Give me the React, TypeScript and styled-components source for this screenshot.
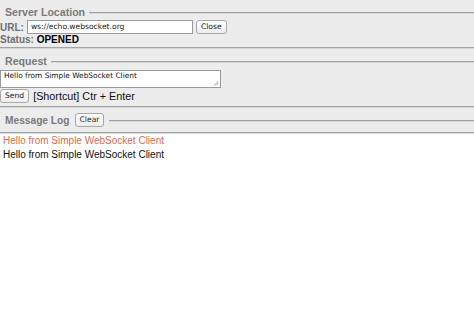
import styled, { createGlobalStyle } from "styled-components";

const GlobalStyle = createGlobalStyle`
	html, body {
		margin: 0;
		padding: 0;
		background: #ffffff;
	}
	body {
		font-family: "Liberation Sans", Arial, sans-serif;
		font-size: 9.6px;
		color: #111111;
	}
`;

const Panel = styled.div`
	background: #ececec;
	overflow: hidden;
`;

const Section = styled.section<{ $bottom: number }>`
	display: flex;
	flex-direction: column;
	padding-bottom: ${({ $bottom }) => $bottom}px;
	border-bottom: 1px solid #a4a4a4;
	box-shadow: 0 1px 0 #d6d6d6;
	margin-bottom: 1px;
`;

const Legend = styled.div`
	display: flex;
	align-items: center;
	height: 16px;
	margin-top: 4px;
	gap: 4px;

	&::after {
		content: "";
		flex: 1;
		height: 1px;
		background: #a4a4a4;
		box-shadow: 0 1px 0 #d6d6d6;
	}
`;

const LegendText = styled.span`
	padding-left: 5px;
	font-size: 10.6px;
	font-weight: 700;
	color: #7a7a7a;
	white-space: nowrap;
`;

const Row = styled.div`
	display: flex;
	align-items: center;
	gap: 3px;
`;

const Label = styled.span`
	font-weight: 700;
	color: #6f6f6f;
	font-size: 10px;
`;

const TextInput = styled.div`
	width: 161px;
	height: 12px;
	border: 1px solid #9a9a9a;
	background: #fff;
	font-family: "DejaVu Sans", sans-serif;
	font-size: 7.6px;
	line-height: 12px;
	padding-left: 3px;
	color: #222;
`;

const Button = styled.button`
	font-family: "DejaVu Sans", sans-serif;
	font-size: 7.6px;
	color: #222;
	background: linear-gradient(#ffffff, #ececec);
	border: 1px solid #a8a8a8;
	border-radius: 3px;
	height: 14px;
	padding: 0 4px;
	line-height: 12px;
	cursor: pointer;
`;

const Status = styled.div`
	margin-top: 1px;
	line-height: 9px;
	font-size: 10px;
`;

const StatusValue = styled.span`
	font-weight: 700;
	color: #000;
`;

const TextArea = styled.div`
	position: relative;
	width: 216px;
	height: 16px;
	margin-top: 1px;
	border: 1px solid #9a9a9a;
	background: #fff;
	font-family: "DejaVu Sans", sans-serif;
	font-size: 7.4px;
	line-height: 10px;
	padding-left: 3px;
	color: #111;

	svg {
		position: absolute;
		right: 1px;
		bottom: 1px;
	}
`;

const SendRow = styled(Row)`
	margin-top: 1px;
	gap: 4px;
`;

const Hint = styled.span`
	font-size: 10.8px;
	color: #111;
`;

const LogLegend = styled(Legend)`
	gap: 5px;
`;

const LogLegendText = styled(LegendText)`
	font-size: 10.2px;
`;

const Log = styled.div`
	padding: 0 0 0 3px;
	font-size: 10px;
	line-height: 14px;
`;

const LogLine = styled.div<{ $sent?: boolean }>`
	color: ${({ $sent }) => ($sent ? "#e06a4c" : "#111111")};
`;

const messages = [
	{ key: 0, text: "Hello from Simple WebSocket Client", sent: true },
	{ key: 1, text: "Hello from Simple WebSocket Client", sent: false },
];

function App() {
	return (
		<>
			<GlobalStyle />
			<Panel>
				<Section $bottom={3}>
					<Legend>
						<LegendText>Server Location</LegendText>
					</Legend>
					<Row>
						<Label>URL:</Label>
						<TextInput>ws://echo.websocket.org</TextInput>
						<Button>Close</Button>
					</Row>
					<Status>
						<Label>Status: </Label>
						<StatusValue>OPENED</StatusValue>
					</Status>
				</Section>
				<Section $bottom={3}>
					<Legend>
						<LegendText>Request</LegendText>
					</Legend>
					<TextArea>
						Hello from Simple WebSocket Client
						<svg width="6" height="6" viewBox="0 0 6 6">
							<path d="M1 5.5 L5.5 1 M3 5.5 L5.5 3" stroke="#888" strokeWidth="0.8" />
						</svg>
					</TextArea>
					<SendRow>
						<Button>Send</Button>
						<Hint>[Shortcut] Ctr + Enter</Hint>
					</SendRow>
				</Section>
				<Section $bottom={4}>
					<LogLegend>
						<LogLegendText>Message Log</LogLegendText>
						<Button>Clear</Button>
					</LogLegend>
				</Section>
			</Panel>
			<Log>
				{messages.map((m) => (
					<LogLine key={m.key} $sent={m.sent}>
						{m.text}
					</LogLine>
				))}
			</Log>
		</>
	);
}

export default App;
